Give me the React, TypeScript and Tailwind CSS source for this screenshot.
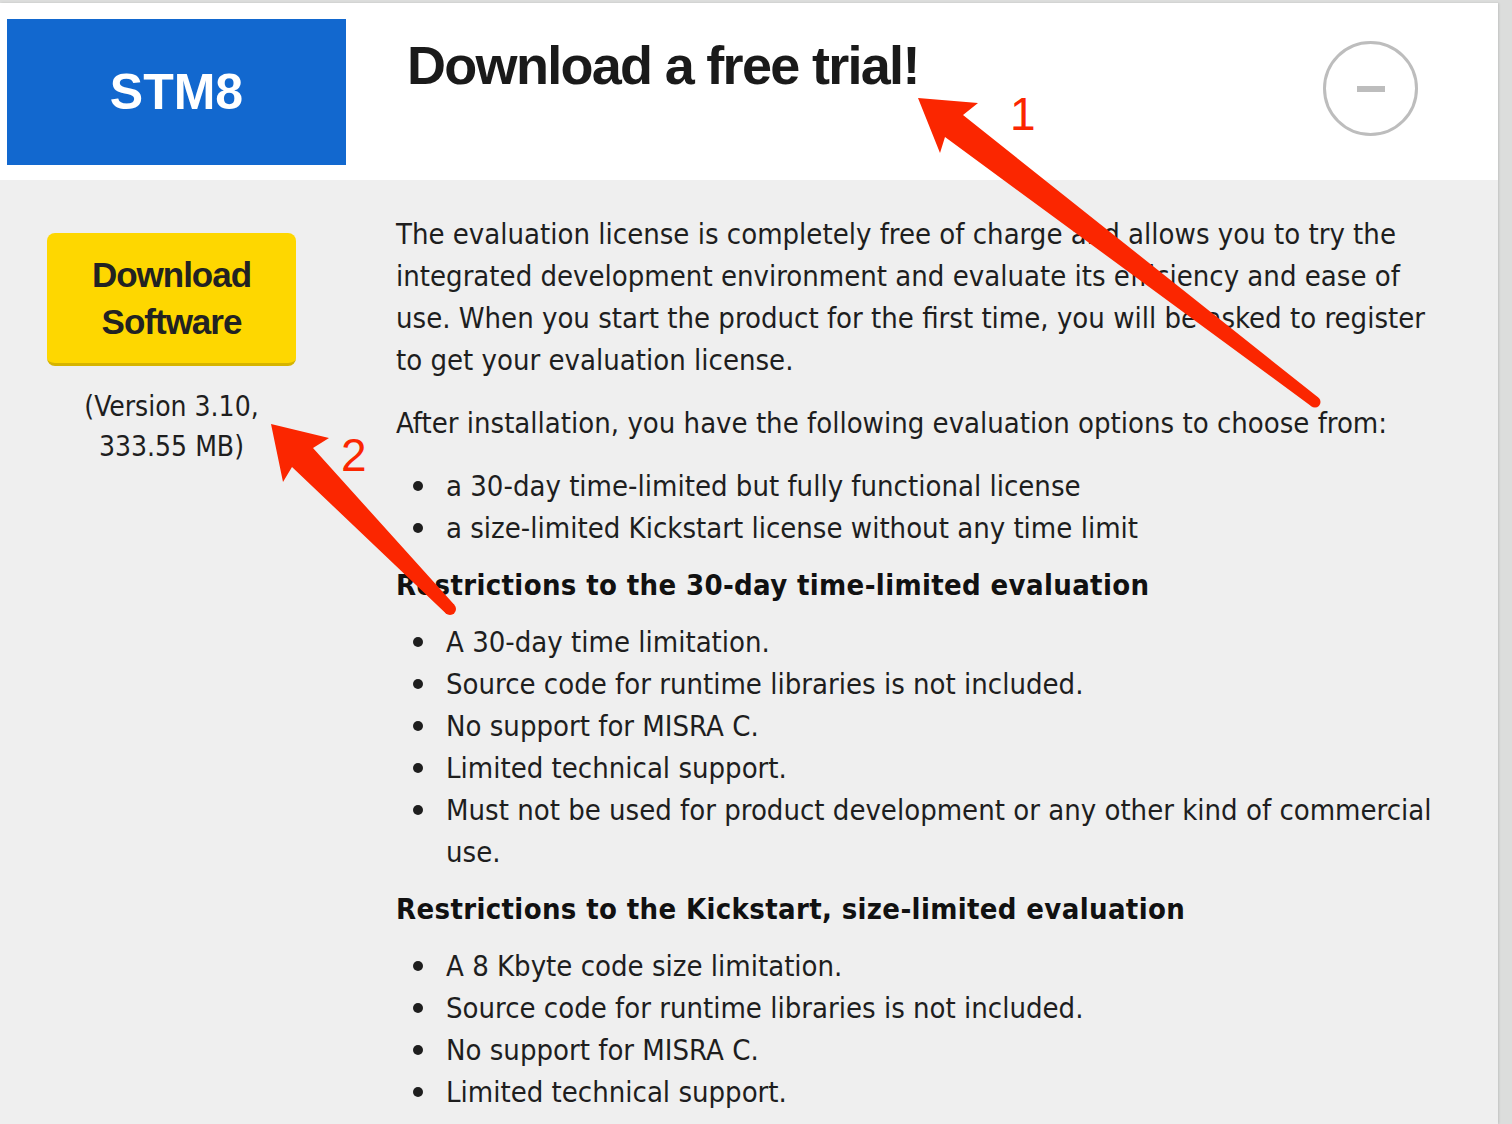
import React from "react";

const bodyFont = { fontFamily: '"DejaVu Sans Condensed", "DejaVu Sans", "Liberation Sans", sans-serif' };
const headFont = { fontFamily: '"Liberation Sans", Arial, sans-serif' };

function Bullet({ children }: { children: React.ReactNode }) {
  return (
    <li className="flex items-start">
      <span className="mt-[16px] ml-[17px] mr-[23px] w-[10px] h-[10px] rounded-full bg-[#1e1e1e] shrink-0" />
      <div>{children}</div>
    </li>
  );
}

export default function App() {
  return (
    <div className="relative w-[1512px] h-[1124px] overflow-hidden bg-[#dcdddc] pt-[3px]">
      <div className="w-[1498px] h-[1121px] bg-[#efefef] shadow-[1px_0_2px_rgba(0,0,0,0.12)]">
        {/* header */}
        <div className="flex items-start h-[177px] bg-white">
          <div
            className="ml-[7px] mt-[16px] w-[339px] h-[146px] bg-[#1268cf] flex items-center justify-center text-white font-bold text-[50px] leading-none"
            style={headFont}
          >
            STM8
          </div>
          <h1
            className="ml-[61px] mt-[35px] text-[54px] leading-none font-bold tracking-[-1.7px] text-[#1a1a1a]"
            style={headFont}
          >
            Download a free trial!
          </h1>
          <div className="ml-auto mr-[80px] mt-[38px] w-[95px] h-[95px] rounded-full border-[3px] border-[#bdbdbd] flex items-center justify-center">
            <div className="w-[28px] h-[6px] bg-[#bdbdbd]" />
          </div>
        </div>

        {/* body */}
        <div className="flex">
          <div className="w-[343px] flex flex-col items-center pt-[53px]">
            <button
              className="w-[249px] h-[133px] rounded-[8px] bg-[#fed700] border-b-[3px] border-[#d6b400] flex items-center justify-center text-center text-[35px] leading-[47px] font-bold tracking-[-1px] text-[#222]"
              style={headFont}
            >
              Download
              <br />
              Software
            </button>
            <p className="mt-[21px] text-[28px] leading-[40px] text-center text-[#1e1e1e]" style={bodyFont}>
              (Version 3.10,
              <br />
              333.55 MB)
            </p>
          </div>

          <div className="ml-[53px] w-[1062px] pt-[33px] text-[29px] leading-[42px] text-[#1e1e1e]" style={bodyFont}>
            <p>
              The evaluation license is completely free of charge and allows you to try the integrated development
              environment and evaluate its efficiency and ease of use. When you start the product for the first time,
              you will be asked to register to get your evaluation license.
            </p>
            <p className="mt-[21px]">After installation, you have the following evaluation options to choose from:</p>
            <ul className="mt-[21px]">
              <Bullet>a 30-day time-limited but fully functional license</Bullet>
              <Bullet>a size-limited Kickstart license without any time limit</Bullet>
            </ul>
            <h3 className="mt-[15px] font-bold tracking-[0.35px] text-[#111]">
              Restrictions to the 30-day time-limited evaluation
            </h3>
            <ul className="mt-[15px]">
              <Bullet>A 30-day time limitation.</Bullet>
              <Bullet>Source code for runtime libraries is not included.</Bullet>
              <Bullet>No support for MISRA C.</Bullet>
              <Bullet>Limited technical support.</Bullet>
              <Bullet>Must not be used for product development or any other kind of commercial use.</Bullet>
            </ul>
            <h3 className="mt-[15px] font-bold tracking-[0.35px] text-[#111]">
              Restrictions to the Kickstart, size-limited evaluation
            </h3>
            <ul className="mt-[15px]">
              <Bullet>A 8 Kbyte code size limitation.</Bullet>
              <Bullet>Source code for runtime libraries is not included.</Bullet>
              <Bullet>No support for MISRA C.</Bullet>
              <Bullet>Limited technical support.</Bullet>
            </ul>
          </div>
        </div>
      </div>

      {/* annotation arrows */}
      <svg className="absolute left-0 top-0 pointer-events-none" width="1512" height="1124" viewBox="0 0 1512 1124">
        <polygon
          fill="#fb2600"
          points="918,98 978,103 963,115 1318.3,397.6 1311.7,406.4 945,137 940,153"
        />
        <circle cx="1315" cy="402" r="5.5" fill="#fb2600" />
        <polygon
          fill="#fb2600"
          points="271,424 329,438 313,448 454.3,604.8 445.7,613.2 292,467 283,482"
        />
        <circle cx="450" cy="609" r="6" fill="#fb2600" />
      </svg>
      <span
        className="absolute left-[1010px] top-[91px] text-[46px] leading-none text-[#fb2600]"
        style={headFont}
      >
        1
      </span>
      <span
        className="absolute left-[341px] top-[432px] text-[46px] leading-none text-[#fb2600]"
        style={headFont}
      >
        2
      </span>
    </div>
  );
}
